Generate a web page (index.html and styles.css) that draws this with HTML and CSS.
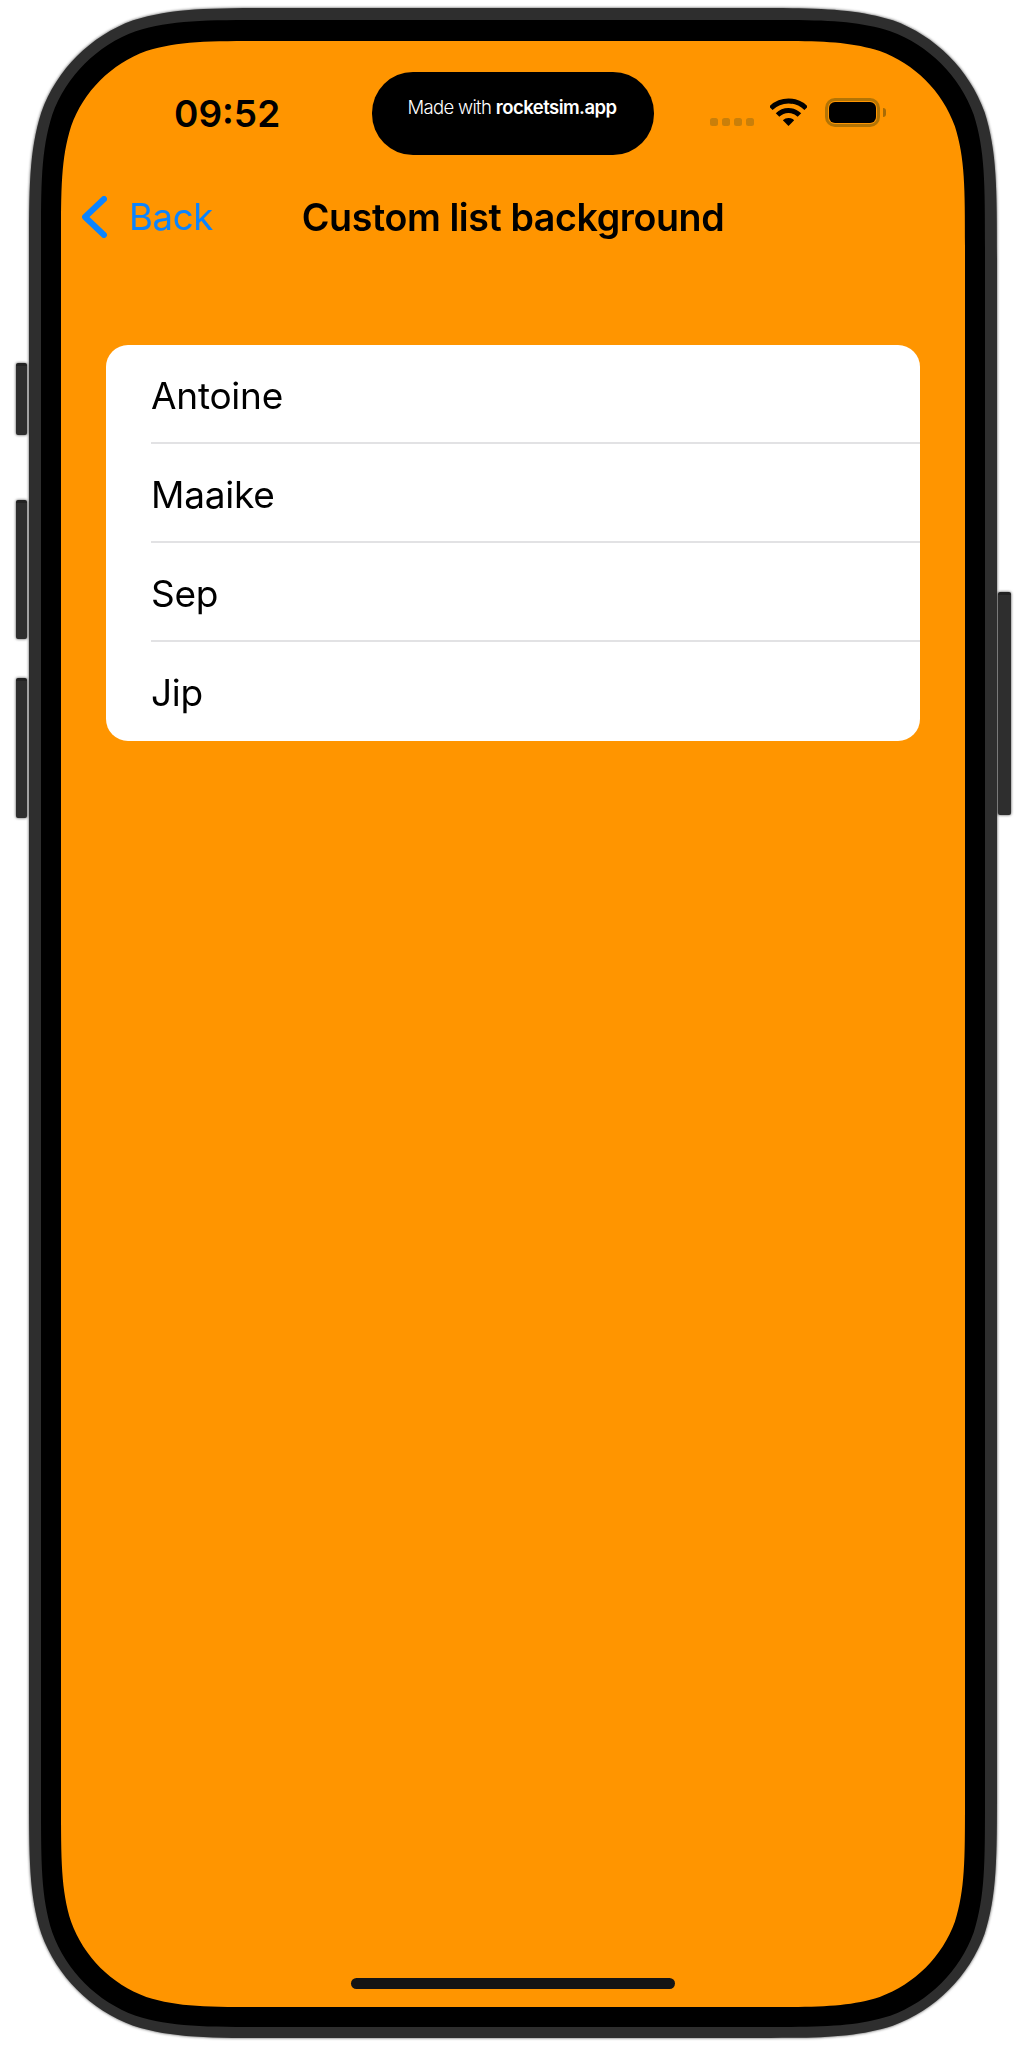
FILE: index.html
```html
<!DOCTYPE html>
<html lang="en">
<head>
<meta charset="utf-8">
<title>Custom list background</title>
<link rel="stylesheet" href="styles.css">
</head>
<body>
<div class="stage">
  <div class="device">
    <span class="hw hw-mute"></span>
    <span class="hw hw-up"></span>
    <span class="hw hw-down"></span>
    <span class="hw hw-power"></span>
    <div class="bezel">
      <div class="glass">
        <div class="screen">
          <div class="status">
            <div class="time">09:52</div>
            <div class="island"><span class="made">Made with <b>rocketsim.app</b></span></div>
            <div class="indicators">
              <div class="dots"><i></i><i></i><i></i><i></i></div>
              <svg class="wifi" viewBox="0 0 37 28" width="37" height="28" aria-hidden="true">
                <path d="M0.82 10.32A25 25 0 0 1 36.18 10.32" fill="none" stroke="#000" stroke-width="5"/>
                <path d="M7.54 17.04A15.5 15.5 0 0 1 29.46 17.04" fill="none" stroke="#000" stroke-width="5"/>
                <path d="M12.84 22.34A8 8 0 0 1 24.16 22.34L18.5 28Z" fill="#000"/>
              </svg>
              <div class="battery"><div class="battery-fill"></div></div>
              <span class="battery-nub"></span>
            </div>
          </div>
          <div class="nav">
            <div class="back">
              <svg class="chevron" viewBox="0 0 25 42" width="25" height="42" aria-hidden="true">
                <path d="M22 3L3 21L22 39" fill="none" stroke="#0a84ff" stroke-width="6" stroke-linecap="round" stroke-linejoin="round"/>
              </svg>
              <span class="back-label">Back</span>
            </div>
            <div class="title">Custom list background</div>
            <div></div>
          </div>
          <div class="list">
            <div class="row"><span>Antoine</span></div>
            <div class="row"><span>Maaike</span></div>
            <div class="row"><span>Sep</span></div>
            <div class="row"><span>Jip</span></div>
          </div>
          <div class="home"></div>
        </div>
      </div>
    </div>
  </div>
</div>
</body>
</html>
```

FILE: styles.css
```css
* { box-sizing: border-box; }
html, body { margin: 0; padding: 0; background: #fff; }
body { font-family: Inter, "Liberation Sans", sans-serif; color: #000; }

.stage { width: 1026px; height: 2048px; padding: 8px 0 0 29px; overflow: hidden; }

.device {
  position: relative;
  width: 968px;
  height: 2030px;
  filter: drop-shadow(0 0 1.5px rgba(0, 0, 0, 0.7));
}

.hw {
  position: absolute;
  background: #2e2e2e;
  border-top: 3px solid #222;
  border-radius: 2px;
}
.hw-mute { left: -13px; top: 355px; width: 11px; height: 72px; }
.hw-up { left: -13px; top: 492px; width: 11px; height: 139px; }
.hw-down { left: -13px; top: 670px; width: 11px; height: 140px; }
.hw-power { right: -14px; top: 584px; width: 13px; height: 223px; }

/* Continuous (squircle) corners: radius 165 / 150 / 135 */
.bezel {
  height: 100%;
  padding: 12px 12px 11px;
  background: #2e2e2e;
  clip-path: path("M252.23 0H715.77c72.63 0 108.94 0 148.03 12.36c42.68 15.53 76.31 49.16 91.84 91.84c12.36 39.09 12.36 75.4 12.36 148.03V1777.77c0 72.63 0 108.94 -12.36 148.03c-15.53 42.68 -49.16 76.31 -91.84 91.84c-39.09 12.36 -75.4 12.36 -148.03 12.36H252.23c-72.63 0 -108.94 0 -148.03 -12.36c-42.68 -15.53 -76.31 -49.16 -91.84 -91.84c-12.36 -39.09 -12.36 -75.4 -12.36 -148.03V252.23c0 -72.63 0 -108.94 12.36 -148.03c15.53 -42.68 49.16 -76.31 91.84 -91.84c39.09 -12.36 75.4 -12.36 148.03 -12.36Z");
}

.glass {
  height: 100%;
  padding: 21px 20px 20px;
  background: #000;
  clip-path: path("M229.3 0H714.7c66.03 0 99.04 0 134.58 11.24c38.8 14.12 69.36 44.68 83.48 83.48c11.24 35.54 11.24 68.55 11.24 134.58V1777.7c0 66.03 0 99.04 -11.24 134.58c-14.12 38.8 -44.68 69.36 -83.48 83.48c-35.54 11.24 -68.55 11.24 -134.58 11.24H229.3c-66.03 0 -99.04 0 -134.58 -11.24c-38.8 -14.12 -69.36 -44.68 -83.48 -83.48c-11.24 -35.54 -11.24 -68.55 -11.24 -134.58V229.3c0 -66.03 0 -99.04 11.24 -134.58c14.12 -38.8 44.68 -69.36 83.48 -83.48c35.54 -11.24 68.55 -11.24 134.58 -11.24Z");
}

.screen {
  display: flex;
  flex-direction: column;
  height: 100%;
  background: #ff9500;
  clip-path: path("M206.37 0H697.63c59.42 0 89.14 0 121.12 10.11c34.92 12.71 62.43 40.22 75.14 75.14c10.11 31.98 10.11 61.7 10.11 121.12V1759.63c0 59.42 0 89.14 -10.11 121.12c-12.71 34.92 -40.22 62.43 -75.14 75.14c-31.98 10.11 -61.7 10.11 -121.12 10.11H206.37c-59.42 0 -89.14 0 -121.12 -10.11c-34.92 -12.71 -62.43 -40.22 -75.14 -75.14c-10.11 -31.98 -10.11 -61.7 -10.11 -121.12V206.37c0 -59.42 0 -89.14 10.11 -121.12c12.71 -34.92 40.22 -62.43 75.14 -75.14c31.98 -10.11 61.7 -10.11 121.12 -10.11Z");
}

.status {
  display: grid;
  grid-template-columns: 311px 282px 1fr;
  align-items: center;
  height: 83px;
  margin-top: 31px;
}
.time {
  padding-left: 113px;
  font-size: 37px;
  font-weight: 600;
  line-height: 1;
}
.island {
  display: flex;
  justify-content: center;
  height: 83px;
  padding: 22px 2px 0 0;
  background: #000;
  border-radius: 41px;
}
.made {
  font-size: 18.5px;
  line-height: 26px;
  font-weight: 300;
  letter-spacing: -0.65px;
  color: #fff;
  white-space: nowrap;
}
.made b { font-weight: 600; letter-spacing: -0.53px; }

.indicators {
  display: flex;
  align-items: center;
  padding-left: 56px;
  margin-top: -3px;
}
.dots { display: flex; gap: 4px; margin-top: 20px; margin-right: 16px; }
.dots i { width: 8px; height: 8px; border-radius: 2.5px; background: #c97f0a; }
.wifi { display: block; margin-right: 18px; }
.battery {
  width: 55px;
  height: 29px;
  padding: 1px;
  border: 3px solid #b37405;
  border-radius: 10px;
}
.battery-fill { height: 100%; background: #000; border-radius: 6px; }
.battery-nub {
  width: 3px;
  height: 9px;
  margin-left: 3px;
  background: #a96b05;
  border-radius: 0 6px 6px 0;
}

.nav {
  display: grid;
  grid-template-columns: 1fr auto 1fr;
  align-items: center;
  height: 124px;
  padding: 0 21px;
}
.back { display: flex; align-items: center; gap: 22px; }
.chevron { display: block; flex: none; }
.back-label { font-size: 36.5px; font-weight: 400; letter-spacing: -0.3px; color: #0a84ff; }
.title { font-size: 37.6px; font-weight: 600; letter-spacing: -0.4px; white-space: nowrap; }

.list {
  margin: 66px 45px 0;
  background: #fff;
  border-radius: 22px;
  overflow: hidden;
}
.row {
  display: flex;
  align-items: center;
  height: 99px;
  margin-left: 45px;
  padding-top: 4px;
  font-size: 37px;
  letter-spacing: -0.25px;
  border-bottom: 2px solid #e2e2e4;
}
.row:last-child { border-bottom-color: transparent; }

.home {
  width: 324px;
  height: 11px;
  margin: auto auto 18px;
  background: #141414;
  border-radius: 6px;
}
```
